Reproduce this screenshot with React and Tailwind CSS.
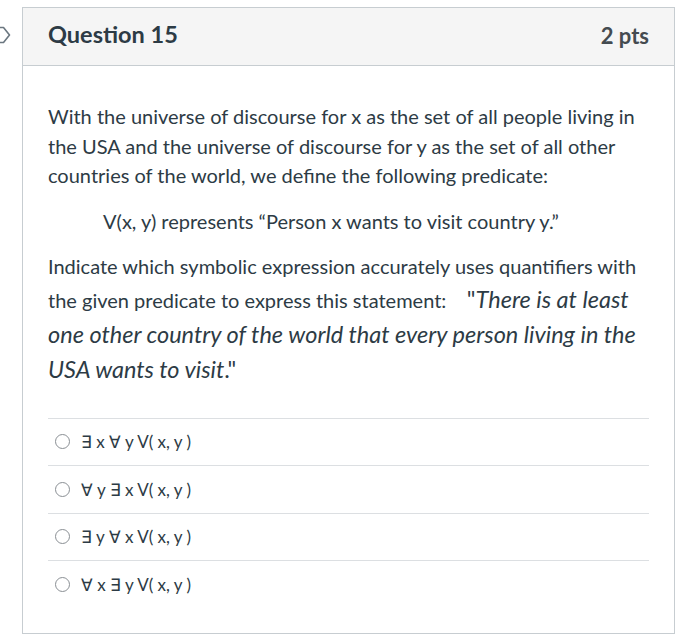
export default function App() {
  const answers = [
    "∃ x ∀ y V( x, y )",
    "∀ y ∃ x V( x, y )",
    "∃ y ∀ x V( x, y )",
    "∀ x ∃ y V( x, y )",
  ];
  return (
    <div className="w-[700px] h-[644px] bg-white relative text-[#2d3b45]" style={{ fontFamily: "Lato, 'Open Sans', sans-serif" }}>
      <svg className="absolute left-0 top-[26px]" width="12" height="18" viewBox="0 0 12 18">
        <path d="M-6 1.5 H3.5 L9.5 9 L3.5 16.5 H-6" fill="none" stroke="#6b7780" strokeWidth="1.6" strokeLinejoin="round" />
      </svg>
      <div className="pt-[7px] pl-[22px]">
        <div className="w-[653px] border border-[#c7cdd1]">
          <div className="h-[58px] bg-[#f5f5f5] border-b border-[#c7cdd1] flex items-center justify-between pl-[25px] pr-[25px] pb-[3px]">
            <div className="text-[23.5px] font-bold">Question 15</div>
            <div className="text-[22px] font-bold text-[#444b50]">2 pts</div>
          </div>
          <div className="pl-[25px] pr-[25px] pt-[36px] pb-[25px]">
            <p className="text-[20px] leading-[29.5px]">
              With the universe of discourse for x as the set of all people living in the USA and the universe of discourse for y as the set of all other countries of the world, we define the following predicate:
            </p>
            <p className="text-[20px] leading-[30px] mt-[15px] pl-[55px]">
              V(x, y) represents “Person x wants to visit country y.”
            </p>
            <p className="text-[20px] leading-[31px] mt-[15px]">
              Indicate which symbolic expression accurately uses quantifiers with the given predicate to express this statement:&nbsp;&nbsp;&nbsp;&nbsp;<span className="text-[23.5px] leading-[35px]">"<em>There is at least one other country of the world that every person living in the USA wants to visit</em>."</span>
            </p>
            <div className="mt-[31px]">
              {answers.map((a, i) => (
                <div key={i} className="h-[47.5px] border-t border-[#dcdfe2] flex items-center">
                  <span className="ml-[7px] w-[15px] h-[15px] rounded-full border-[1.5px] border-[#8a8f94] bg-white"></span>
                  <span className="ml-[11px] text-[17px]">{a}</span>
                </div>
              ))}
            </div>
          </div>
        </div>
      </div>
    </div>
  );
}
